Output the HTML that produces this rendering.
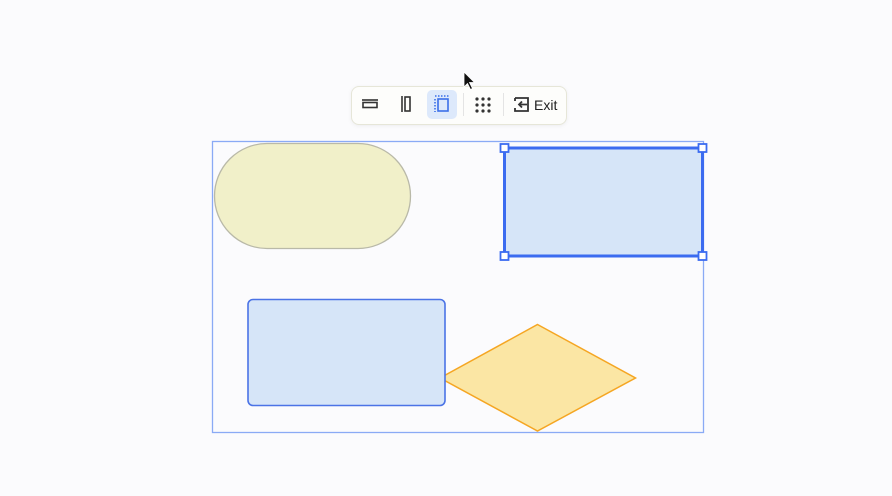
<!DOCTYPE html>
<html><head><meta charset="utf-8"><style>
html,body{margin:0;padding:0;background:#fbfbfd;width:892px;height:496px;overflow:hidden;font-family:"Liberation Sans",sans-serif}
.tb{position:absolute;left:351px;top:86px;width:214px;height:37px;background:#fdfdfb;border:1px solid #e6e6d8;border-radius:8px;box-shadow:0 1px 4px rgba(0,0,0,0.06)}
.act{position:absolute;left:427px;top:90px;width:30px;height:29px;background:#dde9fb;border-radius:5px}
.sep{position:absolute;top:93px;width:1px;height:23px;background:#e4e4e4}
</style></head><body>
<div class="tb"></div>
<div class="act"></div>
<div class="sep" style="left:463px"></div>
<div class="sep" style="left:503px"></div>
<svg width="892" height="496" style="position:absolute;left:0;top:0">
  <g fill="none" stroke="#333" stroke-width="1.6">
    <rect x="363" y="102.5" width="14" height="5"/>
    <line x1="362" y1="100" x2="378" y2="100"/>
    <rect x="405" y="97" width="5" height="14"/>
    <line x1="402" y1="96" x2="402" y2="112"/>
    <rect x="438" y="99" width="10" height="12" stroke="#3b6fe8"/>
    <path d="M435 96h15M435 99v13" stroke="#3b6fe8" stroke-dasharray="1.5 1.5"/>
    <path d="M515 98h13v13h-13v-3M515 101v-3M527 104.5h-8M522 101.5l-3 3 3 3" stroke-width="1.8"/>
  </g>
  <g fill="#333">
    <circle cx="477" cy="99" r="1.6"/><circle cx="483" cy="99" r="1.6"/><circle cx="489" cy="99" r="1.6"/>
    <circle cx="477" cy="105" r="1.6"/><circle cx="483" cy="105" r="1.6"/><circle cx="489" cy="105" r="1.6"/>
    <circle cx="477" cy="111" r="1.6"/><circle cx="483" cy="111" r="1.6"/><circle cx="489" cy="111" r="1.6"/>
  </g>
  <text x="534" y="110" font-family="Liberation Sans" font-size="14" fill="#222">Exit</text>
  <path d="M464 72v15l3.5-3.5 3 6 2-1-3-6h5z" fill="#111" stroke="#fff" stroke-width="0.8"/>
  <rect x="212.5" y="141.5" width="491" height="291" fill="none" stroke="#8aaaf5" stroke-width="1.3"/>
  <rect x="214.5" y="143.5" width="196" height="105" rx="52.5" fill="#f1f0c9" stroke="#b9b9a8" stroke-width="1.3"/>
  <rect x="504.5" y="148" width="198" height="108" fill="#d6e5f8" stroke="#3b6bf0" stroke-width="3"/>
  <g fill="#fff" stroke="#3b6bf0" stroke-width="1.8">
    <rect x="500.5" y="144" width="8" height="8"/><rect x="698.5" y="144" width="8" height="8"/>
    <rect x="500.5" y="252" width="8" height="8"/><rect x="698.5" y="252" width="8" height="8"/>
  </g>
  <path d="M537.5 324.5L635.5 378L537.5 431L440 378Z" fill="#fbe6a4" stroke="#f5a623" stroke-width="1.5"/>
  <rect x="248" y="299.5" width="197" height="106" rx="5" fill="#d6e5f8" stroke="#4b73e6" stroke-width="1.6"/>
</svg>
</body></html>
